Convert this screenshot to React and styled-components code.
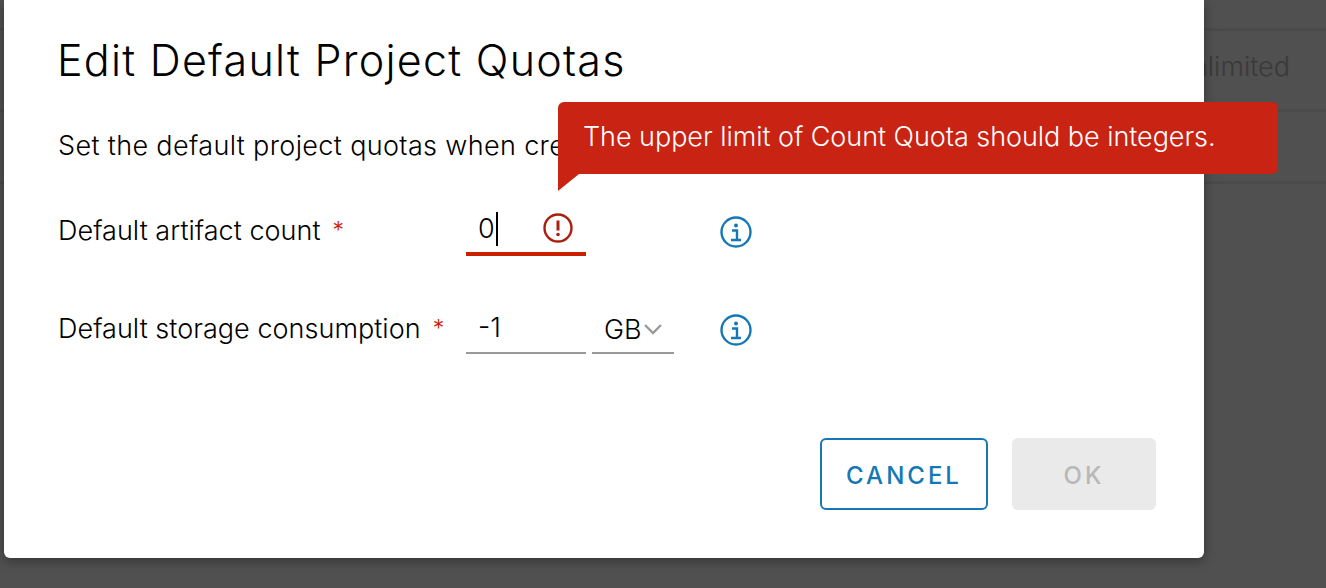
import React from 'react';
import styled, { createGlobalStyle } from 'styled-components';

const Global = createGlobalStyle`
  html, body { margin: 0; padding: 0; height: 100%; overflow: hidden; background: #505050; }
  * { box-sizing: border-box; }
  body { font-family: Inter, "Open Sans", sans-serif; color: #000; }
`

const Page = styled.div`
  position: relative;
  width: 1326px;
  height: 588px;
  overflow: hidden;
  background: #505050;
`
const BackRow = styled.div`
  height: ${(props) => props.height}px;
  border-bottom: 3px solid #4a4a4a;
  display: flex;
  align-items: center;
  justify-content: flex-end;
  padding: 0 36px 8px 0;
  color: #3a3a3a;
  font-size: 27px;
  font-weight: 300;
`
const Modal = styled.div`
  position: absolute;
  left: 4px;
  top: 0;
  width: 1200px;
  height: 558px;
  background: #fff;
  border-radius: 0 0 6px 6px;
  box-shadow: 0 3px 12px rgba(0, 0, 0, 0.35);
  padding: 38px 48px 48px 54px;
  display: flex;
  flex-direction: column;
`
const Title = styled.h3`
  margin: 0 0 0 -1px;
  font-size: 43px;
  line-height: 44px;
  font-weight: 300;
  letter-spacing: 1.26px;
`
const Description = styled.p`
  margin: 48px 0 0;
  font-size: 27px;
  line-height: 32px;
  font-weight: 300;
  letter-spacing: 0.35px;
`
const Form = styled.div`
  margin-top: 34px;
  display: flex;
  flex-direction: column;
  gap: 26px;
`
const Row = styled.div`
  display: grid;
  grid-template-columns: 408px 120px 88px 78px;
  align-items: center;
  height: 72px;
`
const Label = styled.label`
  font-size: 27px;
  line-height: 32px;
  font-weight: 300;
  letter-spacing: 0.03px;
  padding-bottom: 4px;
`
const Star = styled.span`
  color: #c92100;
  font-size: 23px;
  margin-left: 12px;
  vertical-align: 2px;
`
const Field = styled.div`
  position: relative;
  display: flex;
  align-items: center;
  height: 48px;
  padding: 0 0 3px 12px;
  font-size: 27px;
  font-weight: 300;
  border-bottom: ${(props) => (props.error ? '4px solid #c92100' : '2px solid #9a9a9a')};
`
const Caret = styled.span`
  width: 2px;
  height: 34px;
  background: #000;
  margin-left: 1px;
`
const ErrorIcon = styled.svg`
  position: absolute;
  right: 13px;
  top: 5px;
  width: 30px;
  height: 30px;
`
const Select = styled(Field)`
  margin-left: 6px;
  padding-bottom: 0;
  gap: 1px;
`
const Info = styled.svg`
  width: 32px;
  height: 32px;
  justify-self: end;
`
const Tooltip = styled.div`
  position: absolute;
  left: 558px;
  top: 102px;
  width: 720px;
  height: 72px;
  background: #c92313;
  border-radius: 6px 6px 6px 0;
  color: #fff;
  font-size: 27px;
  font-weight: 300;
  letter-spacing: -0.05px;
  line-height: 70px;
  padding-left: 25px;
  &::after {
    content: "";
    position: absolute;
    left: 0;
    top: 72px;
    border-style: solid;
    border-width: 17px 21px 0 0;
    border-color: #c92313 transparent transparent transparent;
  }
`
const Footer = styled.div`
  margin-top: auto;
  display: flex;
  justify-content: flex-end;
  gap: 24px;
`
const Button = styled.button`
  height: 72px;
  width: ${(props) => props.width}px;
  border-radius: 6px;
  padding: 3px 0 0;
  font-family: inherit;
  font-size: 24px;
  font-weight: 450;
  letter-spacing: 3px;
  background: ${(props) => (props.disabled ? '#eaeaea' : '#fff')};
  color: ${(props) => (props.disabled ? '#b8b8b8' : '#1578b4')};
  border: ${(props) => (props.disabled ? 'none' : '2px solid #1578b4')};
`

const InfoIcon = () => (
  <Info viewBox="0 0 32 32" fill="none" stroke="#1578b4">
    <circle cx="16" cy="16" r="14.5" strokeWidth="2.4" />
    <circle cx="16" cy="9.5" r="2" fill="#1578b4" stroke="none" />
    <path d="M12 14.5h5v9M11 24h10" strokeWidth="2.4" />
  </Info>
)

const App = () => (
  <Page>
    <Global />
    <BackRow height={31} />
    <BackRow height={81}>unlimited</BackRow>
    <BackRow height={72} />
    <Modal>
      <Title>Edit Default Project Quotas</Title>
      <Description>Set the default project quotas when creating new projects.</Description>
      <Form>
        <Row>
          <Label>Default artifact count<Star>*</Star></Label>
          <Field error>
            0<Caret />
            <ErrorIcon viewBox="0 0 30 30" fill="none" stroke="#a9200f">
              <circle cx="15" cy="15" r="13.5" strokeWidth="2.4" />
              <path d="M15 7.5v10" strokeWidth="3" />
              <circle cx="15" cy="21.5" r="1.8" fill="#a9200f" stroke="none" />
            </ErrorIcon>
          </Field>
          <span />
          <InfoIcon />
        </Row>
        <Row>
          <Label>Default storage consumption<Star>*</Star></Label>
          <Field>-1</Field>
          <Select>
            GB
            <svg width="20" height="12" viewBox="0 0 20 12" fill="none" stroke="#9a9a9a" strokeWidth="2.4">
              <path d="M2 2l8 8 8-8" />
            </svg>
          </Select>
          <InfoIcon />
        </Row>
      </Form>
      <Footer>
        <Button width={168}>CANCEL</Button>
        <Button width={144} disabled>OK</Button>
      </Footer>
    </Modal>
    <Tooltip>The upper limit of Count Quota should be integers.</Tooltip>
  </Page>
);

export default App;
